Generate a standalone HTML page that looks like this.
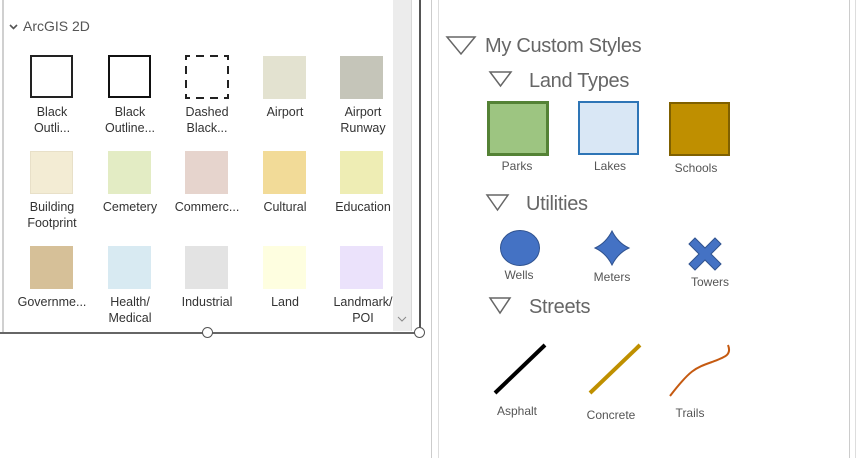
<!DOCTYPE html>
<html><head><style>
body{margin:0;width:864px;height:458px;background:#fff;position:relative;overflow:hidden;font-family:"Segoe UI","Liberation Sans",sans-serif}
.a{position:absolute}
.sw{position:absolute;width:43px;height:43px;box-sizing:border-box}
.lb{position:absolute;width:80px;text-align:center;font-size:12.5px;color:#333;line-height:16px}
.rl{position:absolute;font-size:12px;color:#555;transform:translateX(-50%);white-space:nowrap}
.h{position:absolute;color:#666;font-size:20px;line-height:24px;letter-spacing:-0.3px}
</style></head><body>
<div class="a" style="left:2px;top:0;width:2px;height:332px;background:#d0d0d0"></div>
<div class="a" style="left:393px;top:0;width:19px;height:331px;background:#ececec"></div>
<div class="a" style="left:411px;top:0;width:1px;height:331px;background:#d8d8d8"></div>
<div class="a" style="left:419px;top:0;width:2px;height:333px;background:#555"></div>
<div class="a" style="left:0;top:332px;width:420px;height:2px;background:#666"></div>
<svg class="a" style="left:396px;top:314px" width="12" height="10"><path d="M2 3 L6 7 L10 3" fill="none" stroke="#888" stroke-width="1"/></svg>
<div class="a" style="left:202px;top:327px;width:9px;height:9px;border:1.5px solid #555;border-radius:50%;background:#fff"></div>
<div class="a" style="left:414px;top:327px;width:9px;height:9px;border:1.5px solid #555;border-radius:50%;background:#fff"></div>
<div class="a" style="left:431px;top:0;width:1px;height:458px;background:#ccc"></div>
<div class="a" style="left:438px;top:0;width:1px;height:458px;background:#ddd"></div>
<div class="a" style="left:849px;top:0;width:1px;height:458px;background:#ccc"></div>
<div class="a" style="left:855px;top:0;width:1px;height:458px;background:#ddd"></div>

<svg class="a" style="left:9px;top:23px" width="10" height="8"><path d="M1 2 L4.5 5.5 L8 2" fill="none" stroke="#555" stroke-width="1.6"/></svg>
<div class="a" style="left:23px;top:18px;font-size:14px;color:#555">ArcGIS 2D</div>

<div class="sw" style="left:30px;top:55px;border:2px solid #222;background:#fff"></div>
<div class="sw" style="left:108px;top:55px;border:2px solid #111;background:#fff"></div>
<svg class="a" style="left:185px;top:55px" width="44" height="44"><rect x="1" y="1" width="42" height="42" fill="none" stroke="#222" stroke-width="2" stroke-dasharray="8 6" stroke-dashoffset="4"/></svg>
<div class="sw" style="left:263px;top:56px;background:#e3e2d0"></div>
<div class="sw" style="left:340px;top:56px;background:#c5c5b9"></div>
<div class="lb" style="left:12px;top:104px">Black<br>Outli...</div>
<div class="lb" style="left:90px;top:104px">Black<br>Outline...</div>
<div class="lb" style="left:167px;top:104px">Dashed<br>Black...</div>
<div class="lb" style="left:245px;top:104px">Airport</div>
<div class="lb" style="left:323px;top:104px">Airport<br>Runway</div>

<div class="sw" style="left:30px;top:151px;background:#f3ecd4;border:1px solid #e8e0c8"></div>
<div class="sw" style="left:108px;top:151px;background:#e3ecc4"></div>
<div class="sw" style="left:185px;top:151px;background:#e6d4cd"></div>
<div class="sw" style="left:263px;top:151px;background:#f2db98"></div>
<div class="sw" style="left:340px;top:151px;background:#eeedb4"></div>
<div class="lb" style="left:12px;top:199px">Building<br>Footprint</div>
<div class="lb" style="left:90px;top:199px">Cemetery</div>
<div class="lb" style="left:167px;top:199px">Commerc...</div>
<div class="lb" style="left:245px;top:199px">Cultural</div>
<div class="lb" style="left:323px;top:199px">Education</div>

<div class="sw" style="left:30px;top:246px;background:#d6c098"></div>
<div class="sw" style="left:108px;top:246px;background:#d8eaf2"></div>
<div class="sw" style="left:185px;top:246px;background:#e3e3e3"></div>
<div class="sw" style="left:263px;top:246px;background:#fefee0"></div>
<div class="sw" style="left:340px;top:246px;background:#ebe2fb"></div>
<div class="lb" style="left:12px;top:294px">Governme...</div>
<div class="lb" style="left:90px;top:294px">Health/<br>Medical</div>
<div class="lb" style="left:167px;top:294px">Industrial</div>
<div class="lb" style="left:245px;top:294px">Land</div>
<div class="lb" style="left:323px;top:294px">Landmark/<br>POI</div>

<svg class="a" style="left:0;top:0" width="864" height="458">
<g fill="none" stroke="#666" stroke-width="1.5">
<path d="M447 37 L475 37 L461 54 Z"/>
<path d="M490 72 L511 72 L500.5 86 Z"/>
<path d="M487 195 L508 195 L497.5 210 Z"/>
<path d="M490 298 L510 298 L500 313 Z"/>
</g>
<rect x="488.5" y="102.5" width="59" height="52" fill="#9dc581" stroke="#548235" stroke-width="3"/>
<rect x="579" y="102" width="59" height="52" fill="#d9e7f5" stroke="#2e75b6" stroke-width="2"/>
<rect x="670" y="103" width="59" height="52" fill="#bf8f00" stroke="#7f6000" stroke-width="2"/>
<ellipse cx="520" cy="248" rx="19.5" ry="17.5" fill="#4472c4" stroke="#2f528f" stroke-width="1"/>
<path d="M612 231 Q618 243 629 248 Q618 253 612 265 Q606 253 595 248 Q606 243 612 231 Z" fill="#4472c4" stroke="#2f528f" stroke-width="1"/>
<path d="M695 238 L705 248 L715 238 L721 244 L711 254 L721 264 L715 270 L705 260 L695 270 L689 264 L699 254 L689 244 Z" fill="#4472c4" stroke="#2f528f" stroke-width="1"/>
<line x1="495" y1="393" x2="545" y2="345" stroke="#000" stroke-width="4"/>
<line x1="590" y1="393" x2="640" y2="345" stroke="#bf9000" stroke-width="4"/>
<path d="M670 396 C690 370 695 368 712 362 C725 357 732 355 728 345" fill="none" stroke="#c55a11" stroke-width="2"/>
</svg>
<div class="h" style="left:485px;top:34px">My Custom Styles</div>
<div class="h" style="left:529px;top:69px">Land Types</div>
<div class="h" style="left:526px;top:192px">Utilities</div>
<div class="h" style="left:529px;top:295px">Streets</div>
<div class="rl" style="left:517px;top:159px">Parks</div>
<div class="rl" style="left:610px;top:159px">Lakes</div>
<div class="rl" style="left:696px;top:161px">Schools</div>
<div class="rl" style="left:519px;top:268px">Wells</div>
<div class="rl" style="left:612px;top:270px">Meters</div>
<div class="rl" style="left:710px;top:275px">Towers</div>
<div class="rl" style="left:517px;top:404px">Asphalt</div>
<div class="rl" style="left:611px;top:408px">Concrete</div>
<div class="rl" style="left:690px;top:406px">Trails</div>
</body></html>
